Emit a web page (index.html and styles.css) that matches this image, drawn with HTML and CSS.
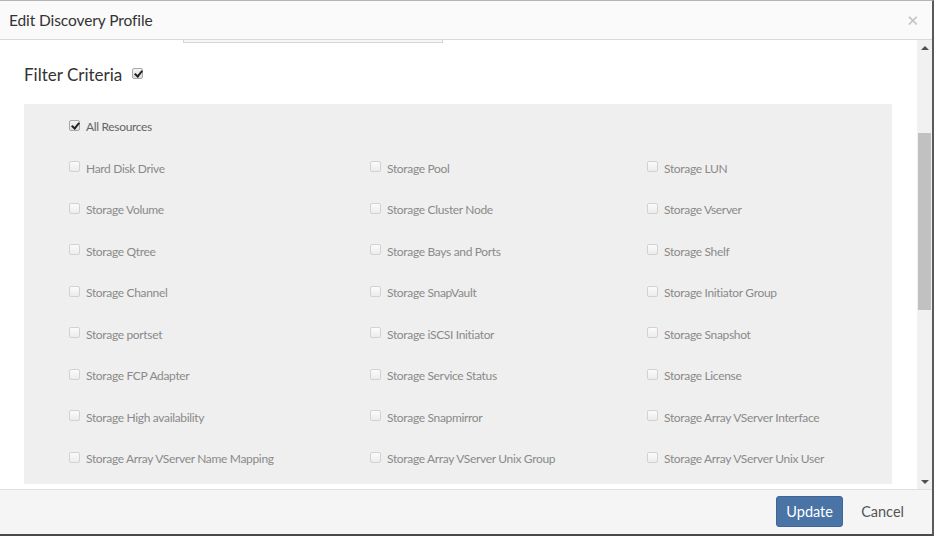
FILE: index.html
```html
<!DOCTYPE html>
<html>
<head>
<meta charset="utf-8">
<link rel="stylesheet" href="styles.css">
</head>
<body>
<div class="modal">
  <div class="modal-header">
    <div class="title">Edit Discovery Profile</div>
    <div class="close">&#x2715;</div>
  </div>
  <div class="modal-body">
    <div class="content">
      <div class="select-edge"></div>
      <div class="section-title">
        <span>Filter Criteria</span>
        <span class="cb checked"></span>
      </div>
      <div class="panel">
        <div class="grid">
          <label class="item main"><span class="cb checked"></span>All Resources</label>
          <span></span><span></span>
          <label class="item"><span class="cb"></span>Hard Disk Drive</label>
          <label class="item"><span class="cb"></span>Storage Pool</label>
          <label class="item"><span class="cb"></span>Storage LUN</label>
          <label class="item"><span class="cb"></span>Storage Volume</label>
          <label class="item"><span class="cb"></span>Storage Cluster Node</label>
          <label class="item"><span class="cb"></span>Storage Vserver</label>
          <label class="item"><span class="cb"></span>Storage Qtree</label>
          <label class="item"><span class="cb"></span>Storage Bays and Ports</label>
          <label class="item"><span class="cb"></span>Storage Shelf</label>
          <label class="item"><span class="cb"></span>Storage Channel</label>
          <label class="item"><span class="cb"></span>Storage SnapVault</label>
          <label class="item"><span class="cb"></span>Storage Initiator Group</label>
          <label class="item"><span class="cb"></span>Storage portset</label>
          <label class="item"><span class="cb"></span>Storage iSCSI Initiator</label>
          <label class="item"><span class="cb"></span>Storage Snapshot</label>
          <label class="item"><span class="cb"></span>Storage FCP Adapter</label>
          <label class="item"><span class="cb"></span>Storage Service Status</label>
          <label class="item"><span class="cb"></span>Storage License</label>
          <label class="item"><span class="cb"></span>Storage High availability</label>
          <label class="item"><span class="cb"></span>Storage Snapmirror</label>
          <label class="item"><span class="cb"></span>Storage Array VServer Interface</label>
          <label class="item"><span class="cb"></span>Storage Array VServer Name Mapping</label>
          <label class="item"><span class="cb"></span>Storage Array VServer Unix Group</label>
          <label class="item"><span class="cb"></span>Storage Array VServer Unix User</label>
        </div>
      </div>
    </div>
    <div class="scrollbar">
      <div class="arrow up"></div>
      <div class="track">
        <div class="track-space top"></div>
        <div class="thumb"></div>
        <div class="track-space bottom"></div>
      </div>
      <div class="arrow down"></div>
    </div>
  </div>
  <div class="modal-footer">
    <button class="btn primary">Update</button>
    <button class="btn link">Cancel</button>
  </div>
</div>
</body>
</html>
```
FILE: styles.css
```css
* { box-sizing: border-box; }
html, body { margin: 0; padding: 0; }
body {
  width: 934px;
  height: 536px;
  overflow: hidden;
  background: #fff;
  font-family: Lato, "Noto Sans", sans-serif;
}
.modal {
  width: 934px;
  height: 536px;
  display: flex;
  flex-direction: column;
  border-top: 1px solid #b5b5b5;
  border-right: 2px solid #5a5a5a;
  border-bottom: 2px solid #4a4a4a;
}
.modal-header {
  height: 39px;
  flex: none;
  background: #fafafa;
  border-bottom: 1px solid #d9d9d9;
  display: flex;
  align-items: center;
  justify-content: space-between;
  padding: 0 13px 0 9px;
}
.title {
  font-size: 15.5px;
  color: #333;
  letter-spacing: -0.1px;
}
.close {
  color: #c2c2c2;
  font-size: 15px;
  font-family: "DejaVu Sans", sans-serif;
  padding-top: 2px;
}
.modal-body {
  flex: 1;
  display: flex;
  min-height: 0;
}
.content {
  flex: 1;
  display: flex;
  flex-direction: column;
  padding: 0 25px 0 24px;
  overflow: hidden;
}
.select-edge {
  margin-left: 159px;
  width: 260px;
  height: 3px;
  border: 1px solid #d6d6d6;
  border-top: none;
  background: #f7f7f7;
  flex: none;
}
.section-title {
  height: 61px;
  flex: none;
  display: flex;
  align-items: center;
  gap: 10px;
  font-size: 17px;
  color: #333;
  padding-top: 2px;
}
.section-title .cb { margin-top: -3px; }
.panel {
  background: #efefef;
  padding: 2px 0 4px 45px;
  flex: none;
}
.grid {
  display: grid;
  grid-template-columns: 301px 277px 1fr;
  grid-auto-rows: 41.5px;
}
.item {
  display: flex;
  align-items: center;
  gap: 6px;
  font-size: 12px;
  letter-spacing: -0.33px;
  color: #8a8a8a;
  white-space: nowrap;
}
.item.main { color: #666; }
.cb {
  display: inline-block;
  width: 11px;
  height: 11px;
  border: 1px solid #d2d2d2;
  border-radius: 2px;
  background: linear-gradient(#fbfbfb, #ececec);
  flex: none;
  position: relative;
}
.item .cb { margin-top: -3px; }
.cb.checked {
  border-color: #a8a8a8;
  background: linear-gradient(#f4f4f4, #dedede);
}
.cb.checked::after {
  content: "";
  position: absolute;
  left: 3px;
  top: 0px;
  width: 3px;
  height: 6px;
  border: solid #222;
  border-width: 0 2px 2px 0;
  transform: rotate(40deg);
}
.scrollbar {
  width: 15px;
  flex: none;
  background: #f1f1f1;
  display: flex;
  flex-direction: column;
}
.arrow {
  height: 15px;
  flex: none;
  display: flex;
  align-items: center;
  justify-content: center;
}
.arrow::before {
  content: "";
  width: 0;
  height: 0;
  border-left: 4px solid transparent;
  border-right: 4px solid transparent;
}
.arrow.up::before { border-bottom: 4px solid #505050; }
.arrow.down::before { border-top: 4px solid #505050; }
.track {
  flex: 1;
  display: flex;
  flex-direction: column;
}
.track-space.top { height: 78px; flex: none; }
.thumb {
  height: 177px;
  flex: none;
  background: #c1c1c1;
  margin: 0 1px;
}
.track-space.bottom { flex: 1; }
.modal-footer {
  height: 45px;
  flex: none;
  background: #f5f5f5;
  border-top: 1px solid #e0e0e0;
  display: flex;
  align-items: center;
  justify-content: flex-end;
  padding: 0 14px 2px 0;
  gap: 4px;
}
.btn {
  font-family: Lato, "Noto Sans", sans-serif;
  font-size: 14.5px;
  border: none;
  cursor: pointer;
}
.btn.primary {
  width: 67px;
  height: 31px;
  background: #4a74a6;
  color: #fff;
  border-radius: 3px;
  border: 1px solid #3f6697;
}
.btn.link {
  background: transparent;
  color: #555;
  padding: 0 14px;
  height: 31px;
}
```
